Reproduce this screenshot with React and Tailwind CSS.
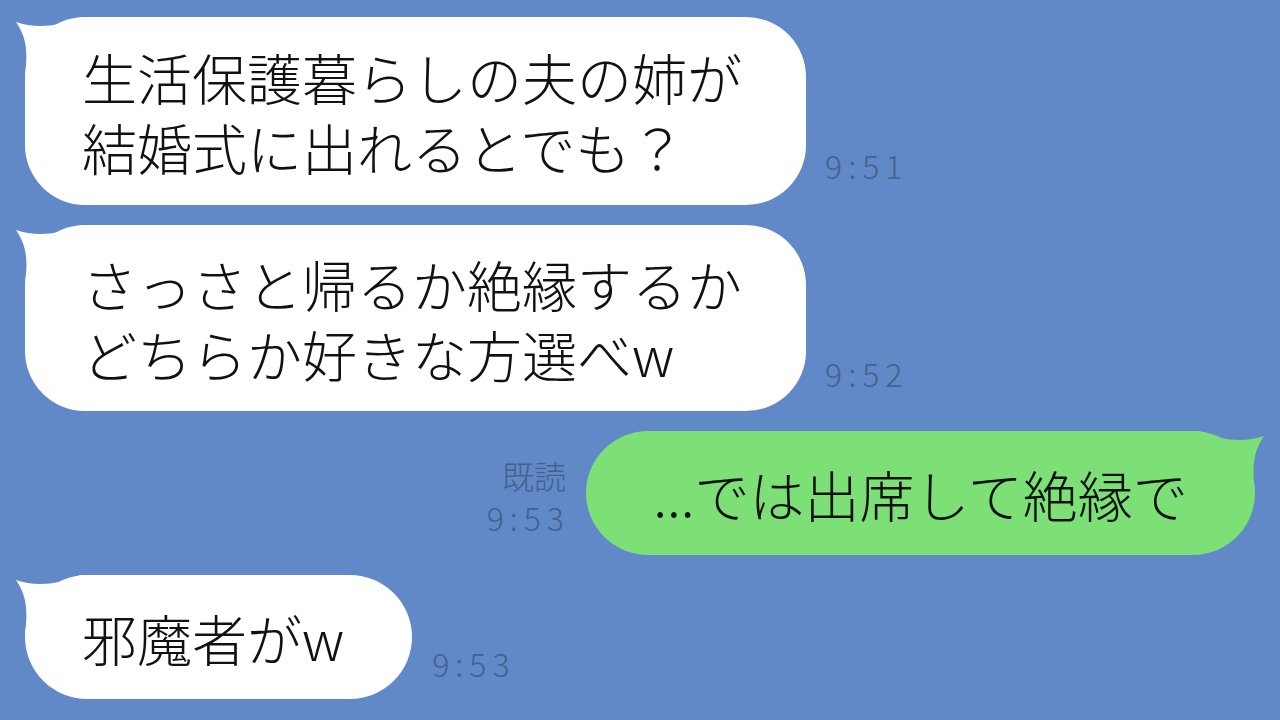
const Tail = ({ color, right }) => (
  <svg
    width="80"
    height="64"
    viewBox="0 0 80 64"
    className={right ? "absolute top-0 right-[-10px] -scale-x-100" : "absolute top-0 left-[-10px]"}
  >
    <path d="M1 5 Q30 15 66 0 L80 0 L80 64 L10 64 C12 40 14 24 1 5 Z" fill={color} />
  </svg>
);

const jp = { fontFamily: '"Noto Sans CJK JP", "Noto Sans", sans-serif' };

const Time = ({ children, mb }) => (
  <div className={`text-[32px] font-light leading-none tracking-[6px] text-[#44618c] ${mb}`} style={jp}>
    {children}
  </div>
);

export default function App() {
  return (
    <div className="w-[1280px] h-[720px] bg-[#6189c7] overflow-hidden flex flex-col gap-[20px] pt-[17px] font-light" style={jp}>
      <div className="flex items-end pl-[25px] gap-[19px]">
        <div className="relative">
          <Tail color="#ffffff" />
          <div className="relative bg-white rounded-[60px] pl-[57px] pr-[64px] py-[24px] text-[55px] leading-[70px] text-[#111]">
            <div>生活保護暮らしの夫の姉が</div>
            <div>結婚式に出れるとでも？</div>
          </div>
        </div>
        <Time mb="mb-[24px]">9:51</Time>
      </div>

      <div className="flex items-end pl-[25px] gap-[19px]">
        <div className="relative">
          <Tail color="#ffffff" />
          <div className="relative bg-white rounded-[60px] pl-[57px] pr-[64px] py-[23px] text-[55px] leading-[70px] text-[#111]">
            <div>さっさと帰るか絶縁するか</div>
            <div>どちらか好きな方選べw</div>
          </div>
        </div>
        <Time mb="mb-[22px]">9:52</Time>
      </div>

      <div className="flex items-end justify-end pr-[19px] gap-[16px]">
        <div className="flex flex-col items-end gap-[10px] mb-[22px]">
          <div className="text-[32px] leading-none text-[#44618c] mr-[4px]">既読</div>
          <Time mb="">9:53</Time>
        </div>
        <div className="relative mr-[6px]">
          <Tail color="#7ce076" right />
          <div className="relative bg-[#7ce076] rounded-[62px] w-[669px] flex justify-center py-[27px] text-[55px] leading-[70px] text-[#111]">
            <div>...では出席して絶縁で</div>
          </div>
        </div>
      </div>

      <div className="flex items-end pl-[25px] gap-[20px]">
        <div className="relative">
          <Tail color="#ffffff" />
          <div className="relative bg-white rounded-[62px] pl-[57px] pr-[68px] py-[27px] text-[55px] leading-[70px] text-[#111]">
            <div>邪魔者がw</div>
          </div>
        </div>
        <Time mb="mb-[20px]">9:53</Time>
      </div>
    </div>
  );
}
